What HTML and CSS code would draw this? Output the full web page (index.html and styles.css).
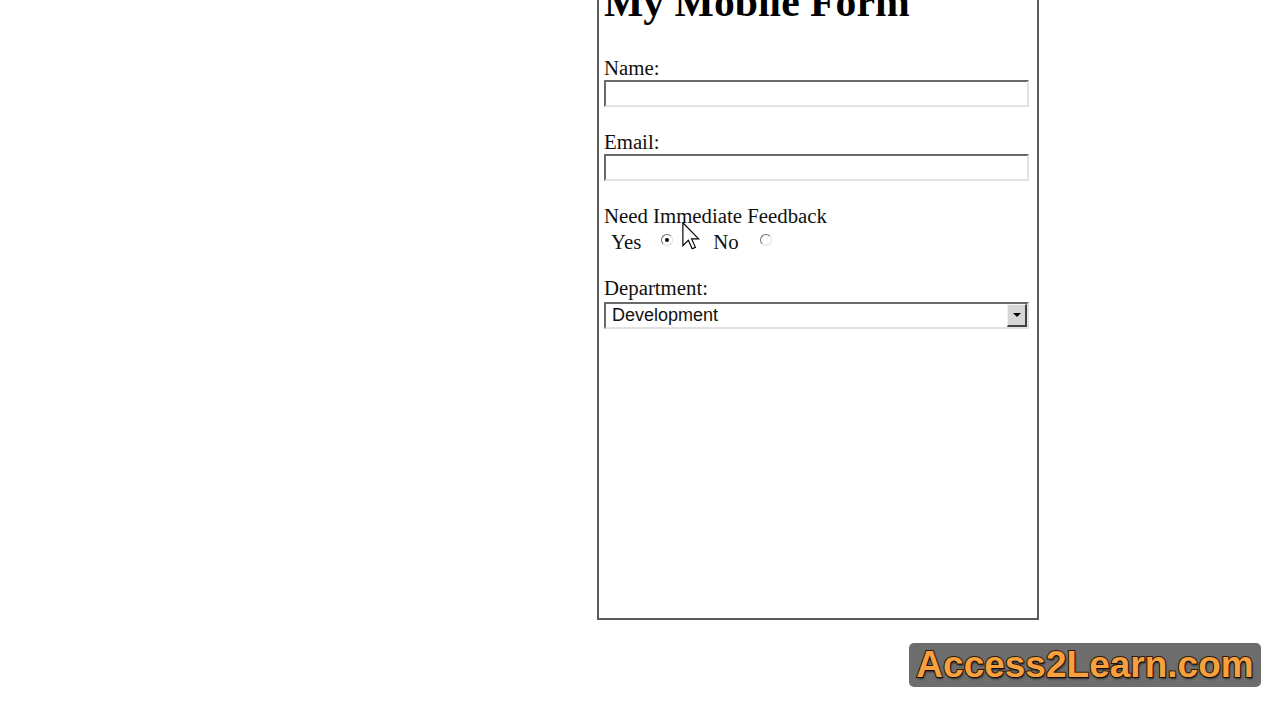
FILE: index.html
```html
<!DOCTYPE html>
<html>
<head>
<meta charset="utf-8">
<title>My Mobile Form</title>
<link rel="stylesheet" href="styles.css">
</head>
<body>
<div class="frame">
  <h1 class="title">My Mobile Form</h1>
  <div class="field">
    <label class="label">Name:</label>
    <div class="textbox"></div>
  </div>
  <div class="field">
    <label class="label">Email:</label>
    <div class="textbox"></div>
  </div>
  <div class="field">
    <div class="label">Need Immediate Feedback</div>
    <div class="radio-row">
      <span class="opt-text yes">Yes</span>
      <span class="radio checked"><span class="dot"></span></span>
      <span class="opt-text no">No</span>
      <span class="radio"></span>
    </div>
  </div>
  <div class="field">
    <label class="label">Department:</label>
    <div class="select">
      <span class="select-text">Development</span>
      <span class="select-btn"><span class="arrow"></span></span>
    </div>
  </div>
</div>

<svg class="cursor" width="18" height="28" viewBox="0 0 12 19">
  <path d="M0.5 0.5 L0.5 16 L4.2 12.4 L6.8 18.2 L9 17.2 L6.4 11.5 L11.2 11.5 Z" fill="#fff" stroke="#000" stroke-width="0.8" stroke-linejoin="miter"/>
</svg>

<div class="watermark"><span class="wm-text">Access2Learn.com</span></div>
</body>
</html>
```

FILE: styles.css
```css
html, body {
  margin: 0;
  padding: 0;
  background: #ffffff;
  overflow: hidden;
}

body {
  width: 1280px;
  height: 720px;
  font-family: "Liberation Serif", "Times New Roman", serif;
  color: #000;
  position: relative;
}

.frame {
  box-sizing: border-box;
  width: 442px;
  height: 643px;
  margin: -23px 0 0 597px;
  border: 2px solid #5a5a5a;
  padding: 0 8px 0 5px;
}

.title {
  margin: 0 0 31px 0;
  font-size: 41.7px;
  line-height: 47px;
  font-weight: bold;
  white-space: nowrap;
}

.field {
  margin-bottom: 24px;
}

.label {
  display: block;
  font-size: 20.8px;
  line-height: 22px;
  padding-bottom: 1px;
  color: #111;
}

.textbox {
  box-sizing: border-box;
  width: 100%;
  height: 27px;
  border-top: 2px solid #6a6a6a;
  border-left: 2px solid #6a6a6a;
  border-right: 2px solid #e2e2e2;
  border-bottom: 2px solid #e2e2e2;
  background: #fff;
}

.radio-row {
  display: flex;
  align-items: center;
  box-sizing: border-box;
  height: 25px;
  padding-top: 3px;
  font-size: 20.8px;
  line-height: 22px;
}

.opt-text {
  color: #111;
}

.yes {
  margin-left: 7px;
}

.radio {
  box-sizing: border-box;
  width: 12px;
  height: 12px;
  border-radius: 50%;
  border: 1px solid #9a9a9a;
  border-top-color: #6e6e6e;
  border-left-color: #6e6e6e;
  border-bottom-color: #e0e0e0;
  border-right-color: #e0e0e0;
  background: #fff;
  display: flex;
  align-items: center;
  justify-content: center;
  margin-top: -5px;
}

.radio.checked {
  margin-left: 20px;
}

.dot {
  width: 4px;
  height: 4px;
  border-radius: 50%;
  background: #000;
}

.no {
  margin-left: 40px;
  margin-right: 21px;
}

.select {
  box-sizing: border-box;
  width: 425px;
  height: 27px;
  margin-top: 2px;
  display: flex;
  align-items: center;
  border-top: 2px solid #6a6a6a;
  border-left: 2px solid #6a6a6a;
  border-right: 2px solid #e2e2e2;
  border-bottom: 2px solid #e2e2e2;
  background: #fff;
}

.select-text {
  flex: 1;
  padding-left: 6px;
  font-family: "Liberation Sans", Arial, sans-serif;
  font-size: 18px;
  color: #111;
}

.select-btn {
  box-sizing: border-box;
  width: 20px;
  height: 23px;
  background: #d6d6d6;
  border-top: 1px solid #f2f2f2;
  border-left: 1px solid #f2f2f2;
  border-right: 2px solid #404040;
  border-bottom: 2px solid #404040;
  display: flex;
  align-items: center;
  justify-content: center;
}

.arrow {
  width: 0;
  height: 0;
  border-left: 4px solid transparent;
  border-right: 4px solid transparent;
  border-top: 4px solid #000;
}

.cursor {
  position: absolute;
  left: 682px;
  top: 222px;
}

.watermark {
  position: absolute;
  left: 909px;
  top: 643px;
  width: 352px;
  height: 44px;
  border-radius: 5px;
  background: #6d6d6d;
  display: flex;
  align-items: center;
  justify-content: center;
}

.wm-text {
  font-family: "Liberation Sans", Arial, sans-serif;
  font-weight: bold;
  font-size: 37px;
  line-height: 44px;
  color: #f6a040;
  -webkit-text-stroke: 2px #2e1a05;
  paint-order: stroke fill;
  text-shadow: 1px 2px 2px rgba(0, 0, 0, 0.6);
}
```
